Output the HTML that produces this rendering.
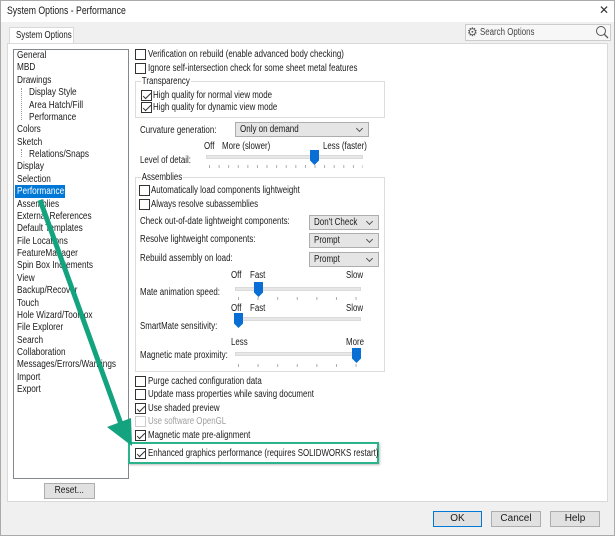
<!DOCTYPE html>
<html><head><meta charset="utf-8"><style>
*{margin:0;padding:0;box-sizing:border-box}
body{width:615px;height:536px;position:relative;overflow:hidden;background:#f0f0f0;font-family:"Liberation Sans",sans-serif;font-size:10px;color:#1a1a1a}
.a{position:absolute;white-space:nowrap}
.t{position:absolute;white-space:nowrap;line-height:12px;transform:scaleX(.79);transform-origin:0 0;margin-top:1px;margin-left:1px}
.cb{position:absolute;width:11px;height:11px;border:1px solid #333;background:#fff}
.cb.c::after{content:"";position:absolute;left:3px;top:0px;width:3px;height:7px;border:solid #333;border-width:0 1px 1px 0;transform:rotate(45deg)}
.cb.d{border-color:#ccc}
.sel{position:absolute;background:#e5e5e5;border:1px solid #adadad;height:15px;padding-left:4px;line-height:13px}
.sel span{display:inline-block;transform:scaleX(.8);transform-origin:0 0}
.sel::after{content:"";position:absolute;right:6px;top:3px;width:4px;height:4px;border:solid #555;border-width:0 1px 1px 0;transform:rotate(45deg)}
.grp{position:absolute;border:1px solid #dcdcdc}
.trk{position:absolute;height:4px;background:#e7e7e7;border:1px solid #dadada}
.th{position:absolute;width:9px;height:15px;background:#0a6fd4;clip-path:polygon(0 0,100% 0,100% 70%,50% 100%,0 70%)}
.tk{position:absolute;height:3px;background-image:repeating-linear-gradient(90deg,#aaa 0 1px,transparent 1px 100%)}
.btn{position:absolute;background:#e1e1e1;border:1px solid #adadad;text-align:center;line-height:14px}
.tree div{transform:scaleX(.8);transform-origin:0 0}
</style></head><body>
<div class="a" style="left:0;top:0;width:615px;height:22px;background:#fff;border:1px solid #aaa;border-bottom:none"></div>
<div class="t" style="left:6px;top:4px;font-size:11px">System Options - Performance</div>
<div class="a" style="left:599px;top:3px;font-size:12px;color:#333">✕</div>
<div class="a" style="left:0;top:22px;width:1px;height:514px;background:#aaa"></div>
<div class="a" style="left:614px;top:22px;width:1px;height:514px;background:#aaa"></div>
<div class="a" style="left:9px;top:27px;width:65px;height:17px;background:#fff;border:1px solid #d9d9d9;border-bottom:none"></div>
<div class="t" style="left:15px;top:29px;font-size:10px">System Options</div>
<div class="a" style="left:465px;top:24px;width:146px;height:17px;background:#f7f7f7;border:1px solid #ccc"></div>
<div class="a" style="left:467px;top:25px;font-size:12px;color:#555">⚙</div>
<div class="t" style="left:479px;top:26px;font-size:10px;color:#444">Search Options</div>
<svg class="a" style="left:595px;top:25px" width="14" height="14"><circle cx="6" cy="6" r="4.5" fill="none" stroke="#555"/><line x1="9.3" y1="9.3" x2="13" y2="13" stroke="#555" stroke-width="1.3"/></svg>
<div class="a" style="left:7px;top:43px;width:601px;height:459px;background:#fff;border:1px solid #d9d9d9"></div>
<div class="a" style="left:13px;top:49px;width:116px;height:430px;border:1px solid #828790;background:#fff"></div>
<div class="a" style="left:15px;top:185px;width:50px;height:13px;background:#0078d7"></div>
<div class="a" style="left:21px;top:88px;width:1px;height:32px;border-left:1px dotted #999"></div>
<div class="a" style="left:21px;top:149px;width:1px;height:8px;border-left:1px dotted #999"></div>
<div class="tree" style="position:absolute;left:17px;top:50px;line-height:12.37px;font-size:10.3px">
<div>General</div><div>MBD</div><div>Drawings</div><div style="padding-left:15px">Display Style</div><div style="padding-left:15px">Area Hatch/Fill</div><div style="padding-left:15px">Performance</div><div>Colors</div><div>Sketch</div><div style="padding-left:15px">Relations/Snaps</div><div>Display</div><div>Selection</div><div style="color:#fff">Performance</div><div>Assemblies</div><div>External References</div><div>Default Templates</div><div>File Locations</div><div>FeatureManager</div><div>Spin Box Increments</div><div>View</div><div>Backup/Recover</div><div>Touch</div><div>Hole Wizard/Toolbox</div><div>File Explorer</div><div>Search</div><div>Collaboration</div><div>Messages/Errors/Warnings</div><div>Import</div><div>Export</div>
</div>
<div class="btn" style="left:44px;top:483px;width:51px;height:16px"><span style="display:inline-block;transform:scaleX(.85)">Reset...</span></div>
<div class="cb" style="left:135px;top:49px"></div><div class="t" style="left:147px;top:48px">Verification on rebuild (enable advanced body checking)</div>
<div class="cb" style="left:135px;top:63px"></div><div class="t" style="left:147px;top:62px">Ignore self-intersection check for some sheet metal features</div>
<div class="grp" style="left:135px;top:81px;width:250px;height:37px"></div>
<div class="t" style="left:140px;top:75px;background:#fff;padding:0 1px">Transparency</div>
<div class="cb c" style="left:141px;top:90px"></div><div class="t" style="left:152px;top:89px">High quality for normal view mode</div>
<div class="cb c" style="left:141px;top:102px"></div><div class="t" style="left:152px;top:101px">High quality for dynamic view mode</div>
<div class="t" style="left:139px;top:124px">Curvature generation:</div>
<div class="sel" style="left:235px;top:122px;width:134px"><span>Only on demand</span></div>
<div class="t" style="left:203px;top:140px">Off</div><div class="t" style="left:221px;top:140px">More (slower)</div><div class="t" style="left:322px;top:140px">Less (faster)</div>
<div class="t" style="left:139px;top:154px">Level of detail:</div>
<div class="trk" style="left:206px;top:155px;width:157px"></div>
<div class="tk" style="left:209px;top:165px;width:154px;background-size:9.6px 3px"></div>
<div class="th" style="left:310px;top:150px"></div>
<div class="grp" style="left:135px;top:177px;width:250px;height:195px"></div>
<div class="t" style="left:140px;top:171px;background:#fff;padding:0 1px">Assemblies</div>
<div class="cb" style="left:139px;top:185px"></div><div class="t" style="left:150px;top:184px">Automatically load components lightweight</div>
<div class="cb" style="left:139px;top:199px"></div><div class="t" style="left:150px;top:198px">Always resolve subassemblies</div>
<div class="t" style="left:139px;top:215px">Check out-of-date lightweight components:</div>
<div class="sel" style="left:309px;top:215px;width:70px"><span>Don't Check</span></div>
<div class="t" style="left:139px;top:233px">Resolve lightweight components:</div>
<div class="sel" style="left:309px;top:233px;width:70px"><span>Prompt</span></div>
<div class="t" style="left:139px;top:252px">Rebuild assembly on load:</div>
<div class="sel" style="left:309px;top:252px;width:70px"><span>Prompt</span></div>
<div class="t" style="left:230px;top:269px">Off</div><div class="t" style="left:249px;top:269px">Fast</div><div class="t" style="left:345px;top:269px">Slow</div>
<div class="t" style="left:139px;top:286px">Mate animation speed:</div>
<div class="trk" style="left:235px;top:287px;width:126px"></div>
<div class="tk" style="left:238px;top:297px;width:122px;background-size:19.6px 3px"></div>
<div class="th" style="left:254px;top:282px"></div>
<div class="t" style="left:230px;top:302px">Off</div><div class="t" style="left:249px;top:302px">Fast</div><div class="t" style="left:345px;top:302px">Slow</div>
<div class="t" style="left:139px;top:320px">SmartMate sensitivity:</div>
<div class="trk" style="left:235px;top:317px;width:126px"></div>
<div class="th" style="left:234px;top:313px"></div>
<div class="t" style="left:230px;top:336px">Less</div><div class="t" style="left:345px;top:336px">More</div>
<div class="t" style="left:139px;top:349px">Magnetic mate proximity:</div>
<div class="trk" style="left:235px;top:352px;width:126px"></div>
<div class="tk" style="left:238px;top:364px;width:122px;background-size:19.6px 3px"></div>
<div class="th" style="left:352px;top:348px"></div>
<div class="cb" style="left:135px;top:376px"></div><div class="t" style="left:147px;top:375px">Purge cached configuration data</div>
<div class="cb" style="left:135px;top:389px"></div><div class="t" style="left:147px;top:388px">Update mass properties while saving document</div>
<div class="cb c" style="left:135px;top:403px"></div><div class="t" style="left:147px;top:402px">Use shaded preview</div>
<div class="cb d" style="left:135px;top:416px"></div><div class="t" style="left:147px;top:415px;color:#a0a0a0">Use software OpenGL</div>
<div class="cb c" style="left:135px;top:430px"></div><div class="t" style="left:147px;top:429px">Magnetic mate pre-alignment</div>
<div class="a" style="left:128px;top:442px;width:251px;height:22px;border:2px solid #2bb38c;box-shadow:1px 1px 2px rgba(0,0,0,.25)"></div>
<div class="cb c" style="left:135px;top:448px"></div><div class="t" style="left:147px;top:447px">Enhanced graphics performance (requires SOLIDWORKS restart)</div>
<svg class="a" style="left:0;top:0" width="615" height="536"><line x1="40" y1="200" x2="121" y2="424" stroke="#14a37f" stroke-width="5"/><polygon points="107,427 131,418 132,446" fill="#14a37f"/></svg>
<div class="btn" style="left:433px;top:511px;width:49px;height:16px;border:1px solid #0078d7">OK</div>
<div class="btn" style="left:491px;top:511px;width:50px;height:16px">Cancel</div>
<div class="btn" style="left:550px;top:511px;width:50px;height:16px">Help</div>
<div class="a" style="left:0;top:535px;width:615px;height:1px;background:#aaa"></div>
</body></html>
